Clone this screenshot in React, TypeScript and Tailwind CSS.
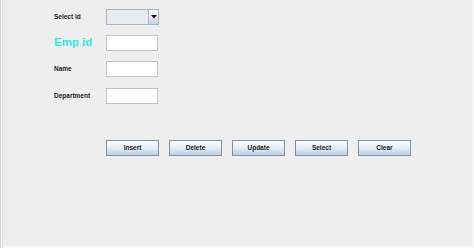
import React from "react";

const labelCls = "w-[52px] shrink-0 text-[6.5px] font-bold text-[#222] leading-none";
const fieldCls = "w-[52px] h-[16px] bg-white border border-[#b8c4d0]";

function Btn({ label }: { label: string }) {
  return (
    <div className="w-[53px] h-[16px] border border-[#8393a6] bg-gradient-to-b from-[#fbfdff] via-[#e4edf6] to-[#bccfe3] flex items-center justify-center text-[6.5px] font-bold text-[#222] leading-none">
      {label}
    </div>
  );
}

export default function App() {
  return (
    <div
      className="w-[474px] h-[248px] bg-[#eeeeee] flex relative"
      style={{ fontFamily: '"Liberation Sans", Arial, sans-serif' }}
    >
      <div className="w-[1px] bg-[#d6d6d6]" />
      <div className="w-[1px] bg-[#fafafa]" />
      <div className="w-[1px] bg-[#dcdcdc]" />
      <div className="flex-1 flex flex-col">
        <div className="flex-1 flex flex-col pl-[51px] pt-[9px]">
          <div className="flex items-center h-[16px]">
            <div className={labelCls}>Select id</div>
            <div className="w-[53px] h-[16px] border border-[#a8b4c0] bg-[#e9ecef] flex">
              <div className="flex-1" />
              <div className="w-[10px] h-full border-l border-[#a8b4c0] bg-gradient-to-b from-[#fbfdff] to-[#c3d4e6] flex items-center justify-center">
                <svg width="6" height="4" viewBox="0 0 6 4">
                  <path d="M0 0H6L3 3.5Z" fill="#111" />
                </svg>
              </div>
            </div>
          </div>
          <div className="flex items-center h-[16px] mt-[10px]">
            <div className="w-[52px] shrink-0 text-[11.5px] font-bold text-[#35e5e5] leading-none">Emp id</div>
            <div className={fieldCls} />
          </div>
          <div className="flex items-center h-[16px] mt-[10px]">
            <div className={labelCls}>Name</div>
            <div className={fieldCls} />
          </div>
          <div className="flex items-center h-[16px] mt-[11px]">
            <div className={labelCls}>Department</div>
            <div className={fieldCls} />
          </div>
          <div className="flex gap-[10px] ml-[52px] mt-[36px]">
            <Btn label="Insert" />
            <Btn label="Delete" />
            <Btn label="Update" />
            <Btn label="Select" />
            <Btn label="Clear" />
          </div>
        </div>
        <div className="h-[2px] bg-[#f7f7f7]" />
      </div>
      <div className="w-[2px] bg-[#f7f7f7]" />
    </div>
  );
}
